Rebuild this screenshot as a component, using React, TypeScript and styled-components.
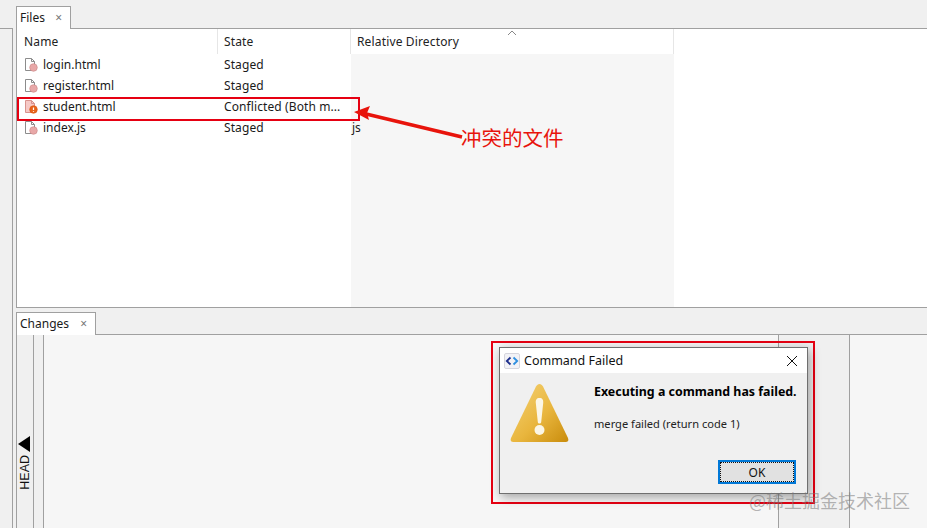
import React from 'react'
import styled, { createGlobalStyle } from 'styled-components'

const FONT = `"Noto Sans", "Noto Sans CJK SC", sans-serif`

const GlobalStyle = createGlobalStyle`
  html, body { margin: 0; padding: 0; background: #f0f0f0; }
  body { font-family: ${FONT}; color: #1a1a1a; font-size: 12px; }
  * { box-sizing: border-box; }
`

const Page = styled.div`
  position: relative;
  width: 927px;
  height: 528px;
  overflow: hidden;
  display: flex;
  background: #f0f0f0;
`

const LeftStrip = styled.div`
  width: 13px;
  margin-top: 28px;
  border-top: 1px solid #a0a0a0;
  border-right: 1px solid #a0a0a0;
  flex: none;
`

const Workspace = styled.div`
  flex: 1;
  display: flex;
  flex-direction: column;
  margin-left: 3px;
  min-width: 0;
`

const TabBar = styled.div<{ $height: number; $pad: number }>`
  height: ${p => p.$height}px;
  padding-top: ${p => p.$pad}px;
  flex: none;
  display: flex;
  align-items: flex-end;
`

const Tab = styled.div<{ $width: number }>`
  width: ${p => p.$width}px;
  height: 100%;
  display: flex;
  align-items: center;
  justify-content: space-between;
  padding: 0 8px 1px 3px;
  background: #fff;
  border: 1px solid #a0a0a0;
  border-bottom: none;
  font-size: 12px;
  position: relative;
  z-index: 1;
  margin-bottom: -1px;
`

const TabClose = styled.span`
  font-size: 12px;
  color: #777;
  line-height: 1;
`

const FilesPanel = styled.div`
  height: 280px;
  flex: none;
  border-top: 1px solid #a0a0a0;
  border-bottom: 1px solid #a0a0a0;
  border-left: 1px solid #a0a0a0;
  background: #fff;
  display: grid;
  grid-template-columns: 201px 133px 323px 1fr;
  grid-template-rows: 25px 1fr;
`

const HeaderCell = styled.div<{ $divider?: boolean; $pad: number }>`
  padding-left: ${p => p.$pad}px;
  display: flex;
  align-items: center;
  font-size: 12px;
  letter-spacing: 0.15px;
  position: relative;
  color: #222;
  border-right: ${p => (p.$divider ? '1px solid #e6e6e6' : 'none')};
`

const SortCaret = styled.svg`
  position: absolute;
  left: 156px;
  top: 1px;
`

const Column = styled.div<{ $gray?: boolean; $pad: number }>`
  padding-left: ${p => p.$pad}px;
  background: ${p => (p.$gray ? '#f6f6f6' : '#fff')};
  display: flex;
  flex-direction: column;
`

const Row = styled.div<{ $spaced?: boolean }>`
  height: 21px;
  display: flex;
  align-items: center;
  gap: 5px;
  white-space: nowrap;
  font-size: 12px;
  letter-spacing: ${p => (p.$spaced ? '0.1px' : '0')};
`

const ChangesPanel = styled.div`
  flex: 1;
  border-top: 1px solid #a0a0a0;
  border-left: 1px solid #a0a0a0;
  display: flex;
  background: #f6f6f6;
  min-height: 0;
`

const Gutter = styled.div`
  width: 17px;
  flex: none;
  background: #f0f0f0;
  border-right: 1px solid #a0a0a0;
  display: flex;
  flex-direction: column;
  align-items: center;
  padding-top: 101px;
`

const HeadArrow = styled.svg`
  display: block;
  margin-right: 2px;
`

const HeadLabel = styled.span`
  writing-mode: vertical-rl;
  transform: rotate(180deg);
  font-family: "Liberation Sans", sans-serif;
  font-size: 12.5px;
  margin-top: 3px;
  color: #111;
`

const SecondGutter = styled.div`
  width: 10px;
  flex: none;
  background: #f0f0f0;
  border-right: 1px solid #a0a0a0;
`

const DiffPane = styled.div`
  flex: 1;
  background: #f6f6f6;
`

const DiffRail = styled.div`
  width: 72px;
  flex: none;
  background: #f0f0f0;
  border-left: 1px solid #a0a0a0;
  border-right: 1px solid #a0a0a0;
`

const DiffEnd = styled.div`
  width: 77px;
  flex: none;
  background: #f6f6f6;
`

const ConflictBox = styled.div`
  position: absolute;
  left: 17px;
  top: 97px;
  width: 343px;
  height: 24px;
  border: 2px solid #e60012;
`

const ArrowLayer = styled.svg`
  position: absolute;
  left: 350px;
  top: 100px;
`

const Note = styled.div`
  position: absolute;
  left: 461px;
  top: 123px;
  font-family: "Noto Sans CJK SC", sans-serif;
  font-size: 20.5px;
  line-height: 28px;
  color: #e8140c;
`

const DialogFrame = styled.div`
  position: absolute;
  left: 491px;
  top: 341px;
  width: 324px;
  height: 163px;
  border: 2px solid #e60012;
`

const Dialog = styled.div`
  position: absolute;
  left: 499px;
  top: 347px;
  width: 309px;
  height: 147px;
  background: #f0f0f0;
  border: 1px solid #6f6f6f;
  box-shadow: 2px 3px 10px rgba(0, 0, 0, 0.35);
  display: flex;
  flex-direction: column;
`

const DialogTitle = styled.div`
  height: 25px;
  flex: none;
  background: #fff;
  display: flex;
  align-items: center;
  gap: 4px;
  padding: 0 9px 0 4px;
  font-size: 12.5px;
  color: #111;
`

const TitleText = styled.span`
  flex: 1;
`

const DialogBody = styled.div`
  flex: 1;
  display: flex;
  padding: 10px 10px 9px 10px;
  gap: 25px;
`

const DialogContent = styled.div`
  flex: 1;
  display: flex;
  flex-direction: column;
`

const Heading = styled.div`
  font-weight: 700;
  font-size: 12.4px;
  line-height: 16px;
  margin-top: 1px;
  white-space: nowrap;
  color: #000;
`

const Message = styled.div`
  font-size: 11.1px;
  line-height: 16px;
  margin-top: 16px;
  color: #222;
`

const OkButton = styled.button`
  margin: auto 1px 0 auto;
  width: 78px;
  height: 24px;
  padding: 0;
  background: #e1e1e1;
  border: 2px solid #0078d7;
  outline: 1px dotted #111;
  outline-offset: -3px;
  font-family: ${FONT};
  font-size: 12px;
  color: #111;
`

const Watermark = styled.div`
  position: absolute;
  left: 749px;
  top: 487px;
  font-family: "Noto Sans CJK SC", sans-serif;
  font-size: 18px;
  line-height: 26px;
  white-space: nowrap;
  color: rgba(120, 120, 120, 0.55);
`

function FileIcon({ conflict }: { conflict?: boolean }) {
  const line = conflict ? '#d9938e' : '#8c8c8c'
  return (
    <svg width="13" height="14" viewBox="0 0 13 14" style={{ flex: 'none' }}>
      <path d="M0.5 0.5H6.5L9.5 3.5V12.5H0.5Z" fill={conflict ? '#f6c9c6' : '#fff'} stroke={line} />
      <path d="M6.5 0.5V3.5H9.5" fill="none" stroke={line} />
      <circle cx="8.5" cy="9.5" r="3.8" fill={conflict ? '#e8641c' : '#e8a8a8'} stroke={conflict ? '#d8500c' : '#c98585'} strokeWidth="0.6" />
      {conflict && <path d="M8.5 7.4V10M8.5 10.9V11.8" stroke="#fff" strokeWidth="1.2" />}
    </svg>
  )
}

function WarningIcon() {
  return (
    <svg width="59" height="60" viewBox="0 0 59 60" style={{ flex: 'none' }}>
      <defs>
        <linearGradient id="warn" x1="0" y1="0" x2="1" y2="1">
          <stop offset="0" stopColor="#f4d276" />
          <stop offset="0.55" stopColor="#e9b63e" />
          <stop offset="1" stopColor="#c98c0c" />
        </linearGradient>
      </defs>
      <path d="M29.5 1C31 1 32 2 33 3.5L58 55C59 57.5 58 59 55.5 59H3.5C1 59 0 57.5 1 55L26 3.5C27 2 28 1 29.5 1Z" fill="url(#warn)" />
      <path d="M29.5 15C32.5 15 33.5 17 33.2 20L31.2 39C31 41 28 41 27.8 39L25.8 20C25.5 17 26.5 15 29.5 15Z" fill="#fbf6e6" />
      <circle cx="29.5" cy="47" r="5" fill="#fbf6e6" />
    </svg>
  )
}

function AppIcon() {
  return (
    <svg width="16" height="16" viewBox="0 0 16 16" style={{ flex: 'none' }}>
      <rect x="0.5" y="0.5" width="15" height="15" rx="1.5" fill="#f2f2f6" stroke="#d5d5dd" />
      <path d="M6.5 4.5L2.8 8L6.5 11.5" fill="none" stroke="#1d2f8c" strokeWidth="1.8" />
      <path d="M9.5 4.5L13.2 8L9.5 11.5" fill="none" stroke="#2f8fe0" strokeWidth="1.8" />
    </svg>
  )
}

const files = [
  { name: 'login.html', state: 'Staged', dir: '' },
  { name: 'register.html', state: 'Staged', dir: '' },
  { name: 'student.html', state: 'Conflicted (Both m...', dir: '', conflict: true },
  { name: 'index.js', state: 'Staged', dir: 'js' },
]

export default function App() {
  return (
    <Page>
      <GlobalStyle />
      <LeftStrip />
      <Workspace>
        <TabBar $height={28} $pad={5}>
          <Tab $width={55}>
            Files
            <TabClose>×</TabClose>
          </Tab>
        </TabBar>
        <FilesPanel>
          <HeaderCell $divider $pad={7}>Name</HeaderCell>
          <HeaderCell $divider $pad={6}>State</HeaderCell>
          <HeaderCell $divider $pad={6}>
            Relative Directory
            <SortCaret width="10" height="6" viewBox="0 0 10 6">
              <path d="M1 5L5 1L9 5" fill="none" stroke="#888" />
            </SortCaret>
          </HeaderCell>
          <div />
          <Column $pad={8}>
            {files.map(f => (
              <Row key={f.name}>
                <FileIcon conflict={f.conflict} />
                {f.name}
              </Row>
            ))}
          </Column>
          <Column $pad={6}>
            {files.map(f => (
              <Row key={f.name} $spaced>{f.state}</Row>
            ))}
          </Column>
          <Column $gray $pad={1}>
            {files.map(f => (
              <Row key={f.name}>{f.dir}</Row>
            ))}
          </Column>
          <div />
        </FilesPanel>
        <TabBar $height={26} $pad={3}>
          <Tab $width={80}>
            Changes
            <TabClose>×</TabClose>
          </Tab>
        </TabBar>
        <ChangesPanel>
          <Gutter>
            <HeadArrow width="12" height="16" viewBox="0 0 12 16">
              <path d="M0 8L12 0V16Z" fill="#000" />
            </HeadArrow>
            <HeadLabel>HEAD</HeadLabel>
          </Gutter>
          <SecondGutter />
          <DiffPane />
          <DiffRail />
          <DiffEnd />
        </ChangesPanel>
      </Workspace>

      <ConflictBox />
      <ArrowLayer width="120" height="50" viewBox="0 0 120 50">
        <path d="M12 13L112 37" stroke="#e8140c" strokeWidth="3.5" fill="none" />
        <path d="M4 12L20 6L17 13L19 20Z" fill="#e8140c" />
      </ArrowLayer>
      <Note>冲突的文件</Note>

      <DialogFrame />
      <Dialog>
        <DialogTitle>
          <AppIcon />
          <TitleText>Command Failed</TitleText>
          <svg width="12" height="12" viewBox="0 0 12 12">
            <path d="M1 1L11 11M11 1L1 11" stroke="#111" strokeWidth="1" />
          </svg>
        </DialogTitle>
        <DialogBody>
          <WarningIcon />
          <DialogContent>
            <Heading>Executing a command has failed.</Heading>
            <Message>merge failed (return code 1)</Message>
            <OkButton>OK</OkButton>
          </DialogContent>
        </DialogBody>
      </Dialog>
      <Watermark>@稀土掘金技术社区</Watermark>
    </Page>
  )
}
